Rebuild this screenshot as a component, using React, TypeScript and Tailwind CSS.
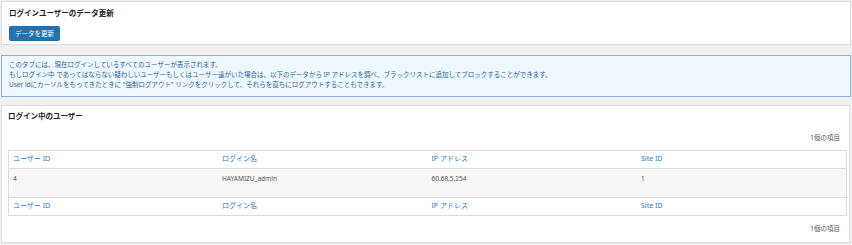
const font = { fontFamily: '"Noto Sans", "Noto Sans CJK JP", sans-serif' };

const columns = ["ユーザー ID", "ログイン名", "IP アドレス", "Site ID"];

const users = [{ id: "4", login: "HAYAMIZU_admin", ip: "60.68.5.254", site: "1" }];

function HeaderRow() {
  return (
    <tr className="h-[18px]">
      {columns.map((c) => (
        <th key={c} className="w-1/4 px-[4px] text-left align-middle text-[7px] font-normal text-[#2f7bbf]">
          {c}
        </th>
      ))}
    </tr>
  );
}

export default function App() {
  return (
    <div className="h-[245px] w-[852px] overflow-hidden bg-[#f0f0f1] pl-[1px] pt-[1px] text-[#1d2327]" style={font}>
      {/* data refresh */}
      <div className="h-[44px] w-[850px] border border-[#dcdcde] bg-white px-[7px] pt-[6px]">
        <h3 className="text-[7.5px] font-bold leading-[10px]">ログインユーザーのデータ更新</h3>
        <button className="mt-[6px] h-[15px] rounded-[2px] bg-[#2271b1] px-[6px] text-[6.5px] leading-[15px] text-white">
          データを更新
        </button>
      </div>

      {/* info */}
      <div className="mt-[10px] h-[42px] w-[850px] border border-[#8db2da] bg-[#f0f8ff] px-[7px] pt-[4px] text-[6.5px] leading-[10px] text-[#2a67a0]">
        <p>このタブには、現在ログインしているすべてのユーザーが表示されます。</p>
        <p>
          もしログイン中 であってはならない疑わしいユーザーもしくはユーザー達がいた場合は、以下のデータから IP
          アドレスを調べ、ブラックリストに追加してブロックすることができます。
        </p>
        <p>User idにカーソルをもってきたときに "強制ログアウト" リンクをクリックして、それらを直ちにログアウトすることもできます。</p>
      </div>

      {/* logged in users */}
      <div className="mt-[8px] h-[138px] w-[849px] border border-[#dcdcde] bg-white px-[6px] pt-[5px]">
        <h3 className="text-[7.5px] font-bold leading-[10px]">ログイン中のユーザー</h3>
        <div className="mt-[12px] pr-[3px] text-right text-[6.5px] leading-[10px] text-[#50575e]">1個の項目</div>
        <table className="mt-[7px] w-[839px] table-fixed border-collapse border border-[#dcdcde]">
          <thead className="border-b border-[#dcdcde]">
            <HeaderRow />
          </thead>
          <tbody>
            {users.map((u) => (
              <tr key={u.id} className="h-[29px] bg-[#f6f7f7] align-top text-[6.5px] text-[#50575e]">
                <td className="px-[4px] pt-[5px]">{u.id}</td>
                <td className="px-[4px] pt-[5px]">{u.login}</td>
                <td className="px-[4px] pt-[5px]">{u.ip}</td>
                <td className="px-[4px] pt-[5px]">{u.site}</td>
              </tr>
            ))}
          </tbody>
          <tfoot className="border-t border-[#dcdcde]">
            <HeaderRow />
          </tfoot>
        </table>
        <div className="mt-[8px] pr-[3px] text-right text-[6.5px] leading-[10px] text-[#50575e]">1個の項目</div>
      </div>
    </div>
  );
}
